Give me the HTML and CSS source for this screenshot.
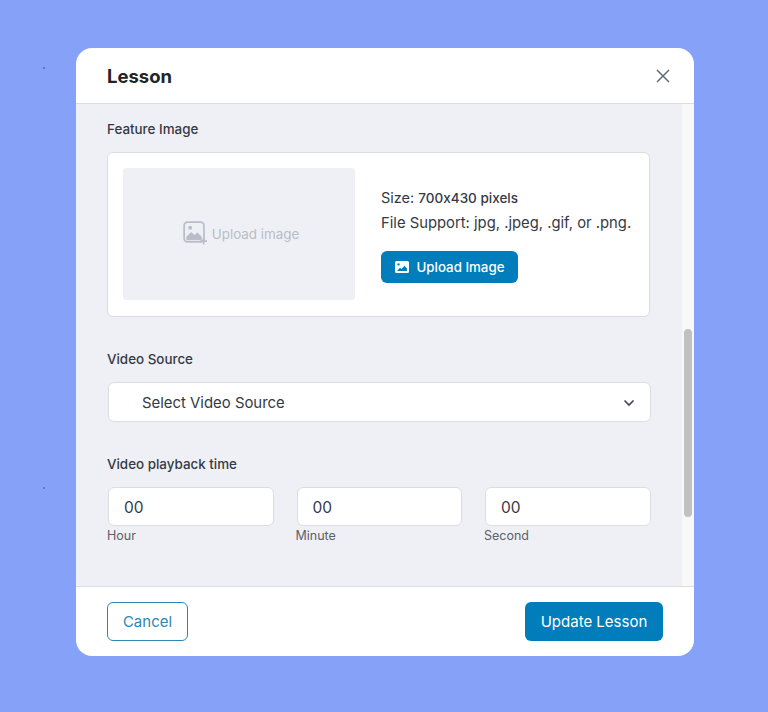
FILE: index.html
```html
<!DOCTYPE html>
<html lang="en">
<head>
  <meta charset="UTF-8">
  <title>Lesson</title>
  <meta name="viewport" content="width=device-width, initial-scale=1.0" />
  <link rel="stylesheet" href="styles.css">
</head>
<body>
  <!-- faint marks of the page behind the overlay -->
  <span class="speck speck-top"></span>
  <span class="speck speck-bottom"></span>

  <div class="modal">
    <header class="modal-header">
      <h1>Lesson</h1>
      <button class="close" aria-label="Close">
        <svg width="14" height="14" viewBox="0 0 14 14"><path d="M1 1l12 12M13 1L1 13" fill="none" stroke="#5f6b7a" stroke-width="1.5"/></svg>
      </button>
    </header>

    <div class="modal-body">
      <div class="content">
        <label class="field-label first">Feature Image</label>
        <div class="upload-box">
          <div class="placeholder">
            <svg width="25" height="25" viewBox="0 0 26 26">
              <rect x="1.2" y="1.2" width="20.6" height="20.6" rx="3.5" fill="none" stroke="#b9bdc7" stroke-width="1.8"/>
              <circle cx="7.5" cy="7" r="2" fill="#b9bdc7"/>
              <path d="M3.500 20v-3.500l5-5 3.500 3 3-2.500 4.500 4.500V20z" fill="#b9bdc7"/>
              <path d="M21.500 17.500v7M18 21h7" stroke="#b9bdc7" stroke-width="1.8" fill="none"/>
            </svg>
            <span>Upload image</span>
          </div>
          <div class="upload-info">
            <p class="size">Size: <strong>700x430 pixels</strong></p>
            <p class="support">File Support: jpg, .jpeg, .gif, or .png.</p>
            <button class="btn btn-small">
              <svg width="14" height="12" viewBox="0 0 14 12"><path fill-rule="evenodd" d="M1.500 0h11A1.500 1.500 0 0 1 14 1.500v9a1.500 1.500 0 0 1-1.500 1.500h-11A1.500 1.500 0 0 1 0 10.500v-9A1.500 1.500 0 0 1 1.500 0zM3.500 2.200a1.200 1.200 0 1 0 0 2.400 1.200 1.200 0 0 0 0-2.400zM2 10h10V7.500L9.500 4.800 6.500 8 5 6.700z" fill="#fff"/></svg>
              Upload Image
            </button>
          </div>
        </div>

        <label class="field-label source">Video Source</label>
        <div class="select">
          <span>Select Video Source</span>
          <svg width="12" height="8" viewBox="0 0 12 8"><path d="M1.500 1.500L6 6l4.500-4.500" fill="none" stroke="#3e4450" stroke-width="1.600"/></svg>
        </div>

        <label class="field-label playback">Video playback time</label>
        <div class="time-row">
          <div class="time-col">
            <div class="time-input">00</div>
            <span>Hour</span>
          </div>
          <div class="time-col">
            <div class="time-input">00</div>
            <span>Minute</span>
          </div>
          <div class="time-col">
            <div class="time-input">00</div>
            <span>Second</span>
          </div>
        </div>
      </div>
      <div class="scrollbar"><div class="thumb"></div></div>
    </div>

    <footer class="modal-footer">
      <button class="btn-outline">Cancel</button>
      <button class="btn btn-large">Update Lesson</button>
    </footer>
  </div>
</body>
</html>
```

FILE: styles.css
```css
* {
  box-sizing: border-box;
}
body {
  margin: 0;
  height: 712px;
  overflow: hidden;
  padding: 48px 0 0 76px;
  background: #86a1f8;
  font-family: Inter, "Liberation Sans", sans-serif;
  font-feature-settings: "calt" 0;
  color: #353a45;
}
.speck {
  position: absolute;
  left: 43px;
  width: 2px;
  height: 2px;
  background: #6479c4;
}
.speck-top {
  top: 67px;
}
.speck-bottom {
  top: 487px;
}
.modal {
  width: 618px;
  height: 608px;
  background: #fff;
  border-radius: 16px;
  overflow: hidden;
  display: flex;
  flex-direction: column;
}
.modal-header {
  height: 56px;
  flex: none;
  display: flex;
  align-items: center;
  justify-content: space-between;
  padding: 0 24px 0 31px;
  border-bottom: 1px solid #dcdde2;
}
.modal-header h1 {
  margin: 0;
  font-size: 18.5px;
  font-weight: 700;
  color: #212327;
}
.close {
  background: none;
  border: none;
  padding: 0;
  display: flex;
}
.modal-body {
  flex: 1;
  display: flex;
  background: #eff0f5;
  min-height: 0;
}
.content {
  flex: 1;
  padding: 0 31px;
}
.field-label {
  display: block;
  font-size: 13.4px;
  font-weight: 500;
  line-height: 18px;
  color: #353a45;
}
.field-label.first {
  margin-top: 16px;
}
.field-label.source {
  margin-top: 33px;
}
.field-label.playback {
  margin-top: 33px;
}
.upload-box {
  margin-top: 14px;
  height: 165px;
  width: 543px;
  display: flex;
  align-items: center;
  gap: 26px;
  padding: 0 15px 2px;
  background: #fff;
  border: 1px solid #dcdde2;
  border-radius: 6px;
}
.placeholder {
  width: 232px;
  height: 132px;
  flex: none;
  display: flex;
  align-items: center;
  justify-content: center;
  gap: 4px;
  padding-left: 4px;
  background: #eff0f5;
  border-radius: 3px;
  font-size: 13.4px;
  color: #b9bdc7;
}
.upload-info {
  padding-top: 4px;
}
.upload-info p {
  margin: 0;
}
.size {
  font-size: 14.5px;
  line-height: 20px;
}
.size strong {
  font-size: 13.5px;
  font-weight: 500;
}
.support {
  margin-top: 5px !important;
  font-size: 14.8px;
  line-height: 20px;
  white-space: nowrap;
}
.btn {
  display: flex;
  align-items: center;
  justify-content: center;
  background: #007dba;
  color: #fff;
  border: none;
  font-family: inherit;
}
.btn-small {
  margin-top: 18px;
  width: 137px;
  height: 32px;
  gap: 8px;
  border-radius: 6px;
  font-size: 13.3px;
  font-weight: 500;
}
.select {
  margin: 14px 0 0 1px;
  width: 543px;
  height: 40px;
  display: flex;
  align-items: center;
  justify-content: space-between;
  padding: 1px 15px 0 33px;
  background: #fff;
  border: 1px solid #dcdde2;
  border-radius: 6px;
  font-size: 14.9px;
}
.time-row {
  margin: 14px 0 0 0;
  width: 543.5px;
  display: flex;
  gap: 22px;
}
.time-col {
  flex: 1;
}
.time-col span {
  display: block;
  margin-top: 2px;
  font-size: 12.5px;
  line-height: 16px;
  color: #5b6069;
}
.time-input {
  margin-left: 1px;
  height: 39px;
  display: flex;
  align-items: center;
  padding: 1px 0 0 15px;
  background: #fff;
  border: 1px solid #dcdde2;
  border-radius: 6px;
  font-size: 15.5px;
}
.scrollbar {
  width: 13px;
  flex: none;
  background: #f8f8f9;
  padding: 225px 3px 0 2px;
}
.thumb {
  height: 188px;
  background: #c1c1c1;
  border-radius: 4px;
}
.modal-footer {
  height: 70px;
  flex: none;
  display: flex;
  align-items: center;
  justify-content: space-between;
  padding: 0 31px;
  border-top: 1px solid #dcdde2;
}
.btn-outline {
  width: 81px;
  height: 39px;
  background: #fff;
  border: 1px solid #2f86b3;
  border-radius: 6px;
  color: #2f86b3;
  font-family: inherit;
  font-size: 15px;
}
.btn-large {
  width: 138px;
  height: 39px;
  border-radius: 6px;
  font-size: 15px;
}
```
